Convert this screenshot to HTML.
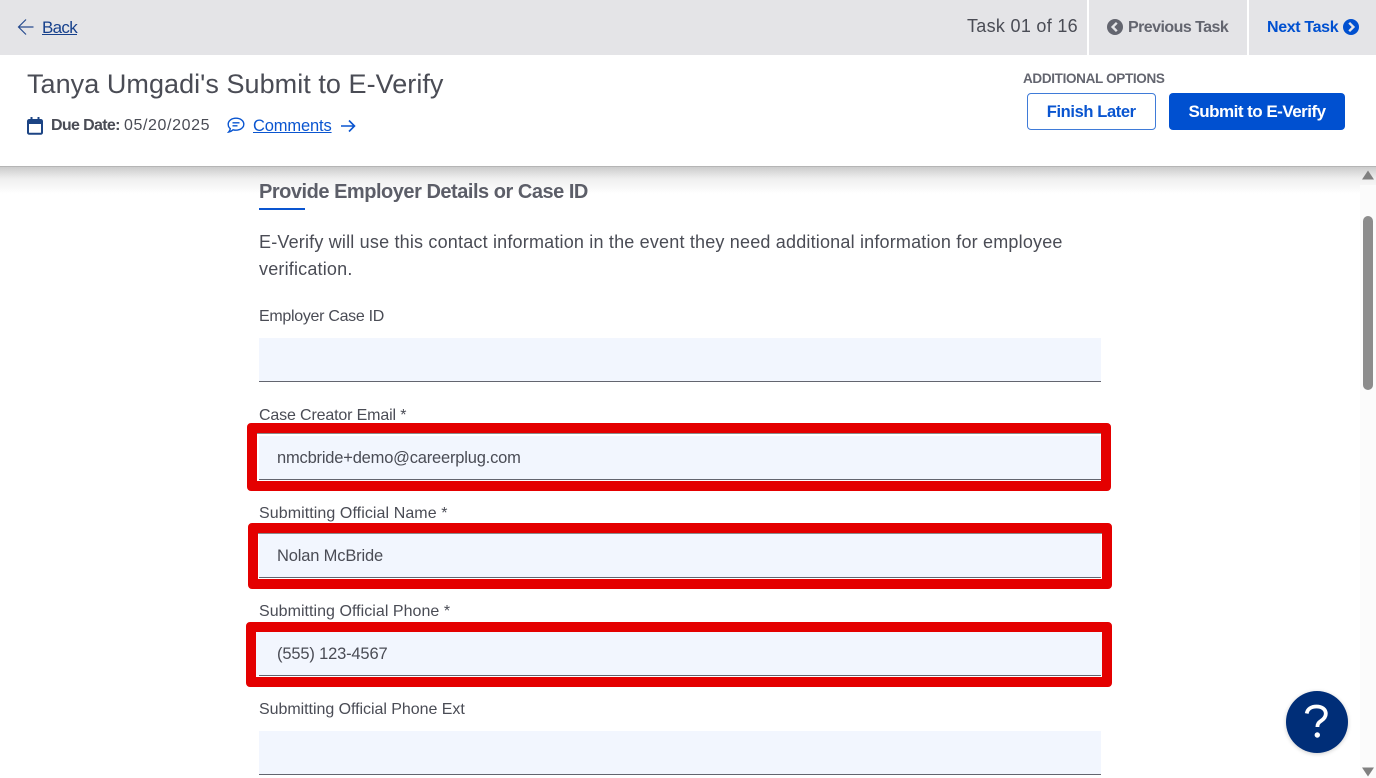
<!DOCTYPE html>
<html lang="en"><head><meta charset="utf-8"><title>Submit to E-Verify</title>
<style>
html,body{margin:0;padding:0;width:1376px;height:778px;overflow:hidden;background:#fff}
body{position:relative;font-family:"Liberation Sans",sans-serif;color:#4a4c55}
.a{position:absolute;white-space:nowrap}
.t{position:absolute;white-space:nowrap;line-height:20px;height:20px}
.f{position:absolute;left:259px;width:842px;height:43px;background:#f2f6fe;border-bottom:1px solid #63656f}
.r{position:absolute;box-sizing:border-box;border:10px solid #e40000;border-radius:4px}
</style></head><body>

<div class="a" style="left:0;top:0;width:1376px;height:55px;background:#e4e4e7"></div>
<div class="a" style="left:1087px;top:0;width:2px;height:55px;background:#fff"></div>
<div class="a" style="left:1247px;top:0;width:2px;height:55px;background:#fff"></div>

<svg class="a" style="left:17px;top:18px" width="18" height="18" viewBox="0 0 18 18" fill="none" stroke="#274b8f" stroke-width="1.2"><path d="M16.500 9H1.500M9 1.500 1.500 9 9 16.500"/></svg>
<div class="t" style="left:42px;top:18px;font-size:17px;color:#16408c;text-decoration:underline;letter-spacing:-.7px">Back</div>

<div class="t" style="left:967px;top:16px;font-size:18px;letter-spacing:.3px;color:#4a4c55">Task 01 of 16</div>

<svg class="a" style="left:1107px;top:19px" width="16" height="16" viewBox="0 0 16 16"><circle cx="8" cy="8" r="8" fill="#63656f"/><path d="M9.800 3.800 5.600 8l4.200 4.200" fill="none" stroke="#e4e4e7" stroke-width="2.400"/></svg>
<div class="t" style="left:1128px;top:18px;font-size:16px;font-weight:700;color:#63656f;letter-spacing:-.55px">Previous Task</div>

<div class="t" style="left:1267px;top:18px;font-size:16px;font-weight:700;color:#0050d0;letter-spacing:-.35px">Next Task</div>
<svg class="a" style="left:1343px;top:19px" width="16" height="16" viewBox="0 0 16 16"><circle cx="8" cy="8" r="8" fill="#0050d0"/><path d="M6.200 3.800 10.400 8l-4.200 4.200" fill="none" stroke="#e4e4e7" stroke-width="2.400"/></svg>

<div class="a" style="left:0;top:166px;width:1376px;height:28px;background:linear-gradient(#c9c9c9,#efefef 45%,#fff)"></div>
<div class="a" style="left:1360px;top:185px;width:16px;height:593px;background:#fbfbfb"></div>

<div class="a" style="left:0;top:55px;width:1376px;height:110.500px;background:#fff;border-bottom:1px solid #b5b5b5"></div>

<div class="t" style="left:27px;top:71px;height:26px;line-height:26px;font-size:27px;color:#4a4c55;letter-spacing:.05px">Tanya Umgadi's Submit to E-Verify</div>

<svg class="a" style="left:27px;top:117px" width="16" height="18" viewBox="0 0 16 18" fill="none" stroke="#1c4484" stroke-width="2"><rect x="1" y="3" width="14" height="13.800" rx="1.200"/><path d="M1 5.500h14" stroke-width="3"/><path d="M4.500 0v3M11.500 0v3"/></svg>
<div class="t" style="left:51px;top:116px;font-size:16px;font-weight:700;color:#4a4c55;letter-spacing:-.65px">Due Date:</div>
<div class="t" style="left:124px;top:116px;font-size:16px;color:#4a4c55;letter-spacing:.6px">05/20/2025</div>

<svg class="a" style="left:227px;top:117px" width="18" height="17" viewBox="0 0 18 17" fill="none" stroke="#0a55d0" stroke-width="1.400"><path d="M9 1.200c4.400 0 7.800 2.600 7.800 6s-3.400 6-7.800 6c-1 0-2-.1-2.900-.4-1 .9-2.400 1.900-4.400 2.200.8-.9 1.400-2 1.600-3.300C2 10.600 1.200 9 1.200 7.200c0-3.400 3.400-6 7.800-6z"/><path d="M5.500 5.800h7M5.500 8.800h5"/></svg>
<div class="t" style="left:253px;top:116px;font-size:16.500px;color:#0a55d0;text-decoration:underline;letter-spacing:-.15px">Comments</div>
<svg class="a" style="left:340px;top:119px" width="16" height="14" viewBox="0 0 16 14" fill="none" stroke="#0a55d0" stroke-width="1.600"><path d="M1 7h13.500M9 1.500 14.500 7 9 12.500"/></svg>

<div class="t" style="left:1023px;top:69px;font-size:13.500px;font-weight:700;color:#63656f;letter-spacing:-.33px">ADDITIONAL OPTIONS</div>
<div class="a" style="left:1027px;top:93px;width:128.500px;height:37px;box-sizing:border-box;border:1px solid #3f7bd8;border-radius:4px;background:#fff;color:#0a55d0;font-size:16.500px;font-weight:700;line-height:36px;text-align:center;letter-spacing:-.38px">Finish Later</div>
<div class="a" style="left:1169px;top:93px;width:176px;height:37px;border-radius:4px;background:#0050d0;color:#fff;font-size:17px;font-weight:700;line-height:37px;text-align:center;letter-spacing:-.52px">Submit to E-Verify</div>

<svg class="a" style="left:1362px;top:170px" width="12" height="10" viewBox="0 0 12 10"><path d="M6 .5 12 9.500H0z" fill="#808080"/></svg>
<div class="a" style="left:1363px;top:216px;width:10px;height:174px;border-radius:5px;background:#8c8c8c"></div>
<svg class="a" style="left:1362px;top:767px" width="12" height="10" viewBox="0 0 12 10"><path d="M0 .5h12L6 9.500z" fill="#808080"/></svg>

<div class="t" style="left:259px;top:182px;font-size:20px;font-weight:700;color:#5c5e68;letter-spacing:-.48px">Provide Employer Details or Case ID</div>
<div class="a" style="left:259px;top:208px;width:46px;height:2px;background:#0a55d0"></div>

<div class="t" style="left:259px;top:232px;font-size:18px;color:#4a4c55;letter-spacing:.19px">E-Verify will use this contact information in the event they need additional information for employee</div>
<div class="t" style="left:259px;top:259px;font-size:18px;color:#4a4c55;letter-spacing:.19px">verification.</div>

<div class="t" style="left:259px;top:307px;font-size:16px;color:#4a4c55;letter-spacing:-.3px">Employer Case ID</div>
<div class="f" style="top:338px"></div>

<div class="r" style="left:247px;top:423px;width:864px;height:68px"></div>
<div class="a" style="left:257px;top:433px;width:844px;height:1px;background:#8a8a8a"></div>
<div class="t" style="left:259px;top:406px;font-size:16px;color:#4a4c55;letter-spacing:-.15px">Case Creator Email *</div>
<div class="f" style="top:436px"></div>
<div class="t" style="left:277px;top:448px;font-size:16.500px;color:#4a4c55;letter-spacing:-.2px">nmcbride+demo@careerplug.com</div>

<div class="r" style="left:248px;top:523px;width:864px;height:66px"></div>
<div class="a" style="left:258px;top:532.500px;width:844px;height:1px;background:#8a8a8a"></div>
<div class="t" style="left:259px;top:504px;font-size:16px;color:#4a4c55;letter-spacing:.08px">Submitting Official Name *</div>
<div class="f" style="top:534px"></div>
<div class="t" style="left:277px;top:546px;font-size:16.500px;color:#4a4c55;letter-spacing:-.17px">Nolan McBride</div>

<div class="r" style="left:246px;top:621.500px;width:866px;height:65.500px"></div>
<div class="t" style="left:259px;top:602px;font-size:16px;color:#4a4c55;letter-spacing:.04px">Submitting Official Phone *</div>
<div class="f" style="top:632px"></div>
<div class="a" style="left:256px;top:632px;width:3px;height:44px;background:#f2f6fe"></div>
<div class="a" style="left:1101px;top:632px;width:1px;height:44px;background:#f2f6fe"></div>
<div class="t" style="left:277px;top:644px;font-size:16.500px;color:#4a4c55;letter-spacing:-.17px">(555) 123-4567</div>

<div class="t" style="left:259px;top:700px;font-size:16px;color:#4a4c55;letter-spacing:-.04px">Submitting Official Phone Ext</div>
<div class="f" style="top:731px"></div>

<div class="a" style="left:1286px;top:691px;width:62px;height:62px;border-radius:50%;background:#002e78;box-shadow:0 1px 4px rgba(0,0,0,.2)"></div>
<svg class="a" style="left:1304px;top:704px" width="26" height="36" viewBox="0 0 26 36" fill="none" stroke="#fff" stroke-width="3.800"><path d="M2.700 9.500C3.500 5 7.300 2.500 12.500 2.500c5.600 0 9.300 3 9.300 7.300 0 3.400-2 5.200-4.500 6.900-2.600 1.800-3.900 3-3.900 6.300"/><circle cx="13.300" cy="31" r="2.700" fill="#fff" stroke="none"/></svg>
</body></html>
